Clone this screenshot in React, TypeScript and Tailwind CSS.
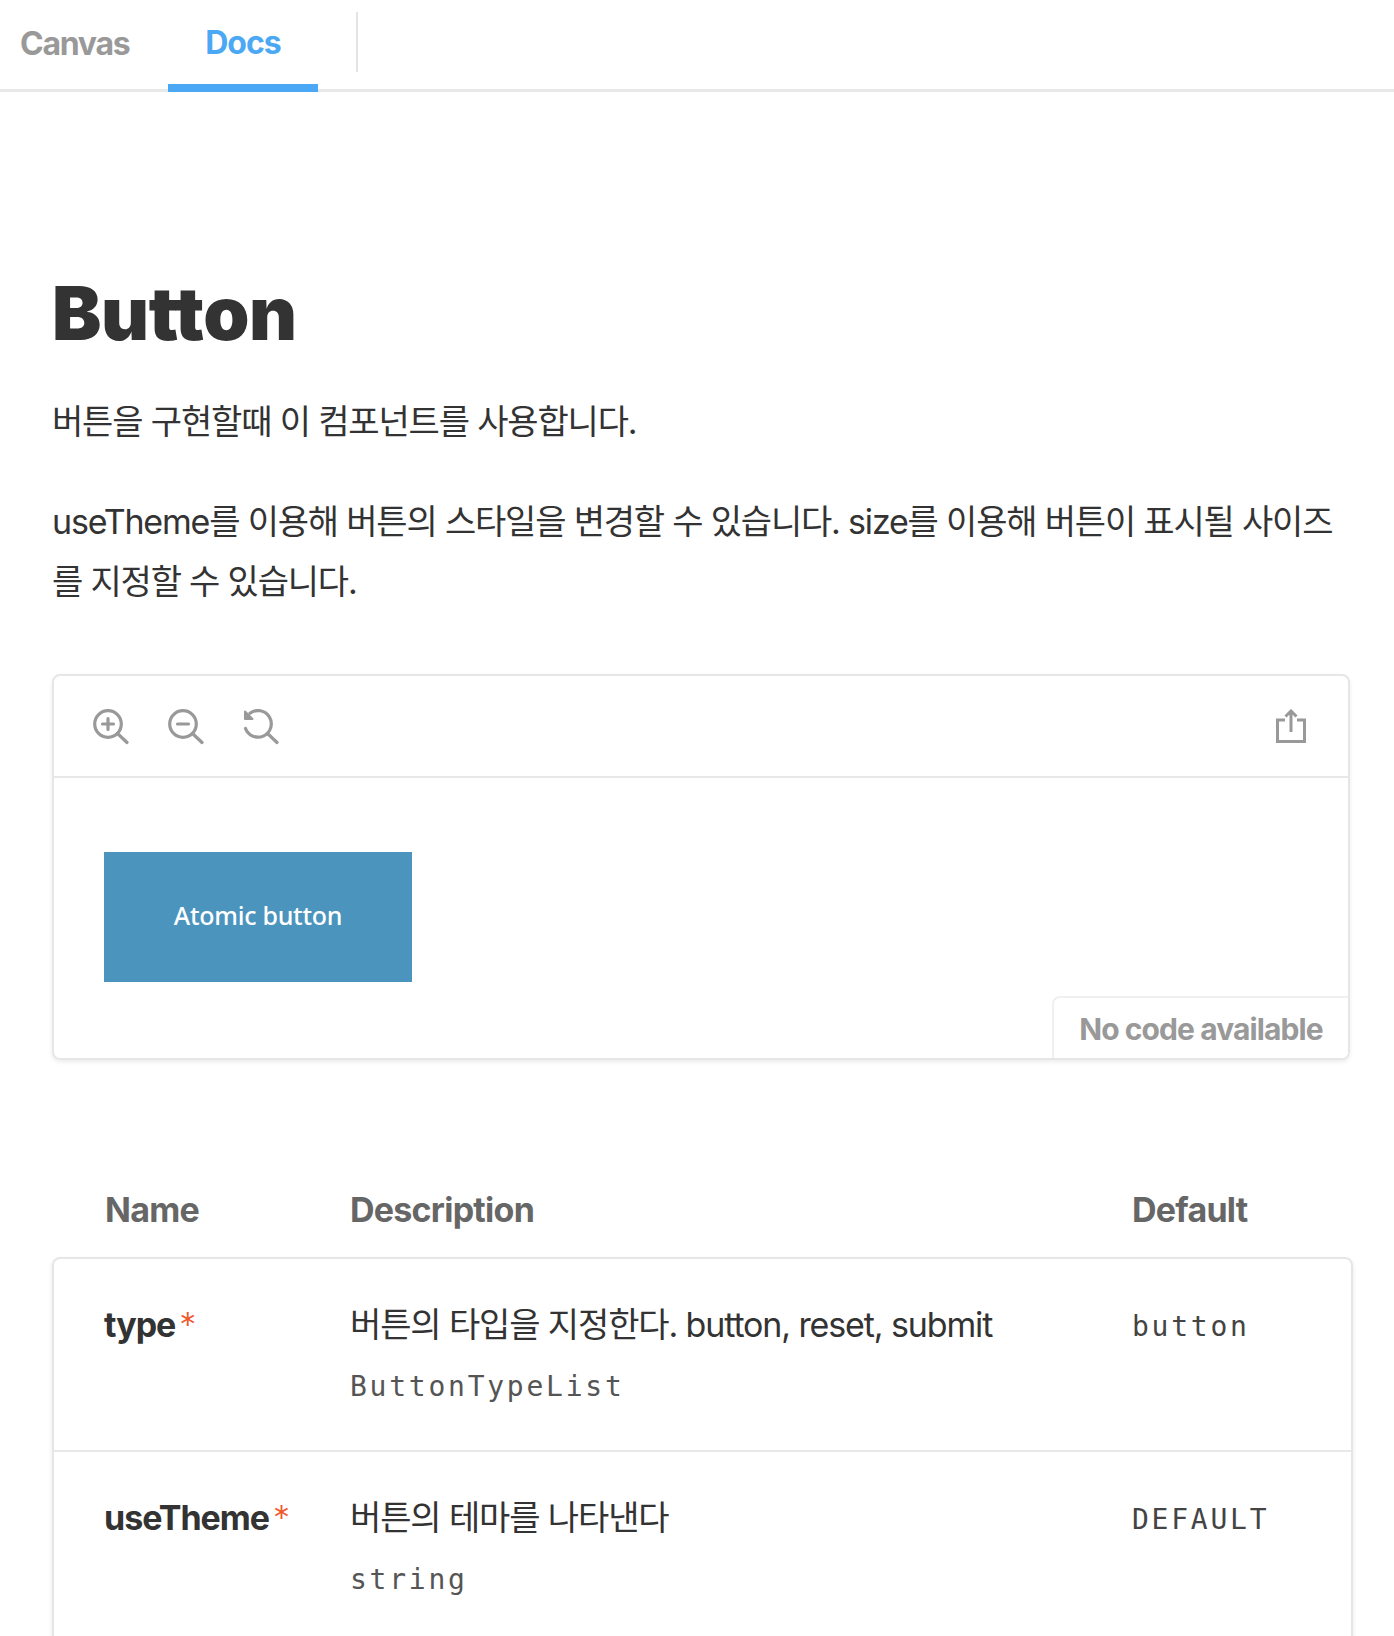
const sans = "font-['Inter','Noto_Sans_CJK_KR',sans-serif]";
const mono = "font-['DejaVu_Sans_Mono','Noto_Sans_CJK_KR',monospace]";

const rows = [
  { name: "type", desc: "버튼의 타입을 지정한다. button, reset, submit", type: "ButtonTypeList", def: "button" },
  { name: "useTheme", desc: "버튼의 테마를 나타낸다", type: "string", def: "DEFAULT" },
];

// toolbar icons share one magnifier shape
function Magnifier({ mark }: { mark: string }) {
  return (
    <svg width="36" height="36" viewBox="0 0 36 36" fill="none" stroke="#999" strokeWidth="3.200" strokeLinecap="round">
      <circle cx="15" cy="15" r="13.300" />
      <path d="M24.500 24.500L34 33.500" />
      <path d={mark} />
    </svg>
  );
}

function ResetIcon() {
  return (
    <svg width="36" height="36" viewBox="0 0 36 36" fill="none" stroke="#999" strokeWidth="3.200" strokeLinecap="round">
      <path d="M7 4.200A13.300 13.300 0 1 1 2.500 19.500" />
      <path d="M24.500 24.500L34 33.500" />
      <path d="M2 2.500V10H9.500Z" fill="#999" strokeLinejoin="round" strokeWidth="2" />
    </svg>
  );
}

function ShareIcon() {
  return (
    <svg width="30" height="34" viewBox="0 0 30 34" fill="none" stroke="#999" strokeWidth="3">
      <path d="M9 11H1.500V32.500H28.500V11H21" />
      <path d="M15 23V2M9.500 7.500L15 2L20.500 7.500" />
    </svg>
  );
}

export default function App() {
  return (
    <div className={`h-[1636px] w-[1394px] overflow-hidden bg-white text-[#333] ${sans}`}>
      <header className="flex h-[92px] items-start border-b-[3px] border-[#e8e8e8]">
        <a className="flex h-[92px] w-[168px] items-center pb-[4px] pl-[20px] text-[32px] font-bold tracking-[-0.04em] text-[#999]">Canvas</a>
        <a className="flex h-[92px] w-[150px] items-center justify-center border-b-[8px] border-[#4ba8f5] pt-[2px] text-[32px] font-bold tracking-[-0.03em] text-[#4ba8f5]">Docs</a>
        <div className="ml-[38px] mt-[12px] h-[60px] w-[2px] bg-[#e4e4e4]" />
      </header>

      <main className="px-[52px]">
        <h1 className="mt-[181px] text-[74px] leading-[80px] font-black tracking-[-0.005em]">Button</h1>
        <p className="mt-[39px] text-[34px] leading-[60px] tracking-[-0.034em]">버튼을 구현할때 이 컴포넌트를 사용합니다.</p>
        <p className="mt-[40px] w-[1296px] text-[34px] leading-[60px] tracking-[-0.035em]">
          useTheme를 이용해 버튼의 스타일을 변경할 수 있습니다. size를 이용해 버튼이 표시될 사이즈를 지정할 수 있습니다.
        </p>

        <section className="relative mt-[62px] w-[1298px] overflow-hidden rounded-[8px] border-2 border-[#e6e6e6] shadow-[0_2px_4px_rgba(0,0,0,0.08)]">
          <div className="flex h-[102px] items-center justify-between border-b-2 border-[#e8e8e8] pl-[39px] pr-[42px]">
            <div className="flex items-center gap-[39px] pt-[2px]">
              <Magnifier mark="M15 9.500V20.500M9.500 15H20.500" />
              <Magnifier mark="M9.500 15H20.500" />
              <ResetIcon />
            </div>
            <ShareIcon />
          </div>
          <div className="h-[280px] pl-[50px] pt-[74px]">
            <button className="h-[130px] w-[308px] bg-[#4a94bd] pb-[3px] font-['Noto_Sans',sans-serif] text-[25px] font-medium tracking-[-0.01em] text-white">Atomic button</button>
          </div>
          <div className="absolute bottom-0 right-0 flex h-[62px] w-[296px] items-center justify-center rounded-tl-[8px] border-l-2 border-t-2 border-[#f0f0f0] bg-white pt-[3px] text-[30px] font-bold tracking-[-0.03em] text-[#999]">
            No code available
          </div>
        </section>

        <div className="mt-[124px] flex h-[64px] items-start text-[34px] font-bold tracking-[-0.022em] text-[#666]">
          <div className="w-[298px] pl-[53px]">Name</div>
          <div className="w-[782px]">Description</div>
          <div>Default</div>
        </div>

        <section className="mt-[9px] w-[1301px] overflow-hidden rounded-[8px] border-2 border-[#e6e6e6] shadow-[0_2px_4px_rgba(0,0,0,0.1)]">
          {rows.map((row) => (
            <div key={row.name} className="flex h-[193px] border-b-2 border-[#e8e8e8] pt-[36px] last:h-[300px]">
              <div className="w-[296px] pl-[50px] text-[34px] leading-[60px] font-bold tracking-[-0.03em]">
                {row.name}
                <span className="ml-[4px] font-light text-[#f0562a]">*</span>
              </div>
              <div className="w-[782px]">
                <p className="text-[34px] leading-[60px] tracking-[-0.033em]">{row.desc}</p>
                <p className={`mt-[2px] text-[28px] leading-[60px] tracking-[2.75px] text-[#555] ${mono}`}>{row.type}</p>
              </div>
              <div className={`pt-[2px] text-[28px] leading-[60px] tracking-[2.75px] text-[#444] ${mono}`}>{row.def}</div>
            </div>
          ))}
        </section>
      </main>
    </div>
  );
}
